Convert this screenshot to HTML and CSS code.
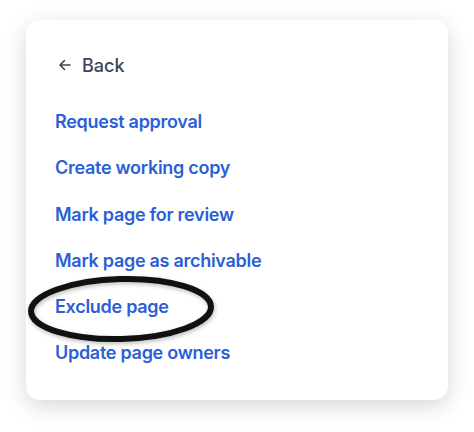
FILE: index.html
```html
<!DOCTYPE html>
<html lang="en">
<head>
    <meta charset="UTF-8">
    <meta name="viewport" content="width=device-width, initial-scale=1.0">
    <title>Page actions</title>
    <link rel="stylesheet" href="styles.css">
</head>
<body>
    <div class="card">
        <a class="back" href="#">
            <svg class="back__icon" width="14" height="14" viewBox="0 0 14 14" fill="none" stroke="currentColor" stroke-width="1.6" stroke-linecap="round" stroke-linejoin="round">
                <path d="M12 7H2M6.5 2.5L2 7l4.5 4.5"/>
            </svg>
            <span>Back</span>
        </a>
        <ul class="menu">
            <li><a href="#">Request approval</a></li>
            <li><a href="#">Create working copy</a></li>
            <li><a href="#">Mark page for review</a></li>
            <li><a href="#">Mark page as archivable</a></li>
            <li class="menu__marked"><a href="#">Exclude page</a></li>
            <li><a href="#">Update page owners</a></li>
        </ul>
    </div>
    <!-- hand-drawn annotation ring -->
    <svg class="ring" width="200" height="80" viewBox="0 0 200 80">
        <ellipse cx="95" cy="35" rx="90" ry="30" fill="none" stroke="#111" stroke-width="6" transform="rotate(-1.5 95 35)"/>
    </svg>
</body>
</html>
```

FILE: styles.css
```css
body {
    margin: 0;
    height: 432px;
    background: #ffffff;
    font-family: Inter, "Liberation Sans", Arial, sans-serif;
    position: relative;
    padding: 20px 26px 0 26px;
    box-sizing: border-box;
}

.card {
    width: 422px;
    height: 380px;
    box-sizing: border-box;
    background: #ffffff;
    border-radius: 14px;
    box-shadow: 0 6px 22px rgba(0, 0, 0, 0.16);
    padding: 33px 0 0 29px;
}

.back {
    display: flex;
    align-items: center;
    gap: 10px;
    color: #3d4458;
    text-decoration: none;
    font-size: 18px;
    font-weight: 500;
    padding-left: 3px;
    height: 24px;
}

.back__icon {
    display: block;
}

.menu {
    list-style: none;
    margin: 33px 0 0 0;
    padding: 0;
    display: flex;
    flex-direction: column;
    gap: 22.3px;
}

.menu li {
    height: 24px;
    line-height: 24px;
}

.menu a {
    color: #2b5fd6;
    text-decoration: none;
    font-size: 18px;
    font-weight: 600;
    letter-spacing: -0.28px;
}

.ring {
    position: absolute;
    left: 26px;
    top: 274px;
    filter: drop-shadow(1px 2px 2px rgba(0, 0, 0, 0.25));
}
```
